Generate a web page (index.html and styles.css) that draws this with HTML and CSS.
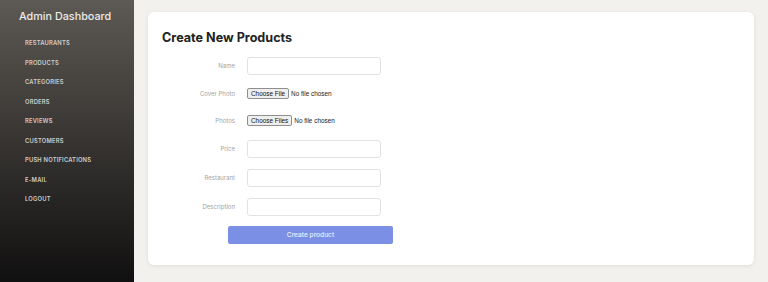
FILE: index.html
```html
<!DOCTYPE html>
<html lang="en">
<head>
    <meta charset="utf-8">
    <title>Admin Dashboard</title>
    <link rel="stylesheet" href="styles.css">
</head>
<body>
    <!-- 侧边栏 -->
    <aside class="sidebar">
        <h1 class="brand">Admin Dashboard</h1>
        <nav class="side-nav">
            <a href="#">Restaurants</a>
            <a href="#">Products</a>
            <a href="#">Categories</a>
            <a href="#">Orders</a>
            <a href="#">Reviews</a>
            <a href="#">Customers</a>
            <a href="#">Push Notifications</a>
            <a href="#">E-mail</a>
            <a href="#">Logout</a>
        </nav>
    </aside>

    <main class="content">
        <section class="card">
            <h2 class="card-title">Create New Products</h2>
            <form class="product-form">
                <div class="form-row">
                    <label>Name</label>
                    <input type="text" class="text-input">
                </div>
                <div class="form-row file-row">
                    <label>Cover Photo</label>
                    <input type="file" class="file-input">
                </div>
                <div class="form-row file-row">
                    <label>Photos</label>
                    <input type="file" class="file-input" multiple>
                </div>
                <div class="form-row">
                    <label>Price</label>
                    <input type="text" class="text-input">
                </div>
                <div class="form-row">
                    <label>Restaurant</label>
                    <input type="text" class="text-input">
                </div>
                <div class="form-row">
                    <label>Description</label>
                    <input type="text" class="text-input">
                </div>
                <button type="button" class="submit-btn">Create product</button>
            </form>
        </section>
    </main>
</body>
</html>
```

FILE: styles.css
```css
* { box-sizing: border-box; }

body {
    margin: 0;
    display: flex;
    height: 282px;
    background: #f2f1ee;
    font-family: Inter, "Liberation Sans", sans-serif;
}

/* 侧边栏 */
.sidebar {
    width: 134px;
    flex-shrink: 0;
    background: linear-gradient(to bottom, #5d5954, #111010);
    padding: 10px 0 0 19px;
}

.brand {
    margin: 0 0 9px;
    font-size: 10.8px;
    line-height: 14px;
    font-weight: 500;
    color: #ececea;
}

.side-nav {
    display: flex;
    flex-direction: column;
    padding-left: 6px;
}

.side-nav a {
    color: #cfcdca;
    text-decoration: none;
    text-transform: uppercase;
    font-size: 5.8px;
    font-weight: 600;
    letter-spacing: 0.2px;
    line-height: 19.5px;
}

/* 主区域 */
.content {
    flex: 1;
    padding: 12px 14px 17px;
}

.card {
    background: #fff;
    border-radius: 6px;
    box-shadow: 0 1px 4px rgba(0,0,0,0.08);
    padding: 17px 14px 21px;
    height: 253px;
}

.card-title {
    margin: 0 0 4px;
    font-size: 12.6px;
    font-weight: 700;
    color: #222;
    line-height: 18px;
}

.form-row {
    display: grid;
    grid-template-columns: 73px 134px;
    column-gap: 12px;
    align-items: center;
    height: 29px;
}

.form-row.file-row { height: 27px; }

.form-row label {
    text-align: right;
    font-size: 6px;
    color: #a3a3a3;
}

.text-input {
    width: 134px;
    height: 18px;
    border: 1px solid #e2e2e2;
    border-radius: 3px;
    background: #fff;
}

.file-input {
    font-size: 6.4px;
    font-family: "Liberation Sans", Arial, sans-serif;
    color: #222;
}

.file-input::file-selector-button {
    font: inherit;
    padding: 1px 3px;
    margin-right: 2px;
    border: 1px solid #8f8f8f;
    border-radius: 2px;
    background: #efefef;
    color: #111;
}

.submit-btn {
    display: block;
    margin: 5px 0 0 66px;
    width: 165px;
    height: 18px;
    border: none;
    border-radius: 2px;
    background: #7b8fe4;
    color: #eef0fb;
    font-family: inherit;
    font-size: 6.6px;
    font-weight: 500;
}
```
